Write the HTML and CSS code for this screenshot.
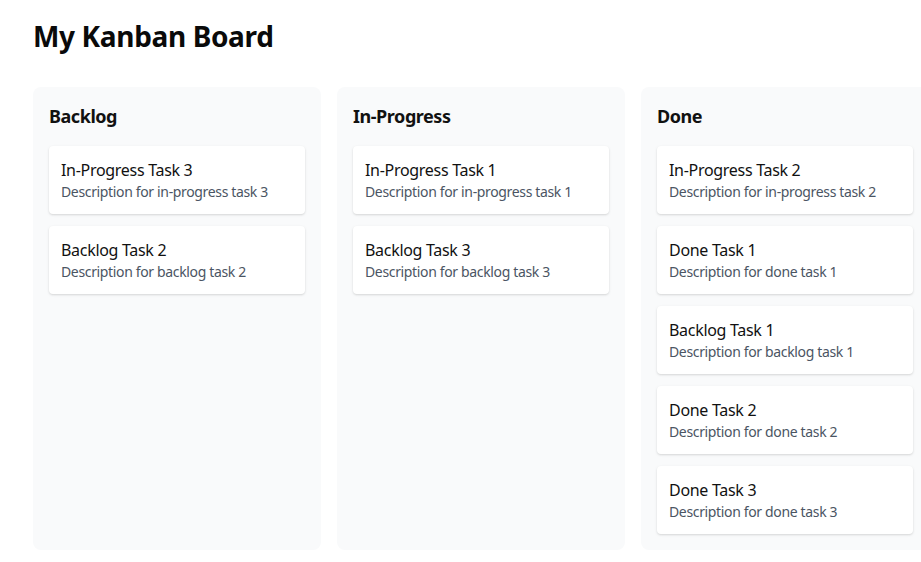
FILE: index.html
```html
<!DOCTYPE html>
<html lang="en">
<head>
<meta charset="utf-8">
<title>My Kanban Board</title>
<link rel="stylesheet" href="styles.css">
</head>
<body>
<div class="app">
  <h1 class="board-title">My Kanban Board</h1>
  <div class="board">
    <section class="column">
      <h2 class="column-title">Backlog</h2>
      <div class="card-list">
        <div class="card"><div class="card-title">In-Progress Task 3</div><div class="card-desc">Description for in-progress task 3</div></div>
        <div class="card"><div class="card-title">Backlog Task 2</div><div class="card-desc">Description for backlog task 2</div></div>
      </div>
    </section>
    <section class="column">
      <h2 class="column-title">In-Progress</h2>
      <div class="card-list">
        <div class="card"><div class="card-title">In-Progress Task 1</div><div class="card-desc">Description for in-progress task 1</div></div>
        <div class="card"><div class="card-title">Backlog Task 3</div><div class="card-desc">Description for backlog task 3</div></div>
      </div>
    </section>
    <section class="column">
      <h2 class="column-title">Done</h2>
      <div class="card-list">
        <div class="card"><div class="card-title">In-Progress Task 2</div><div class="card-desc">Description for in-progress task 2</div></div>
        <div class="card"><div class="card-title">Done Task 1</div><div class="card-desc">Description for done task 1</div></div>
        <div class="card"><div class="card-title">Backlog Task 1</div><div class="card-desc">Description for backlog task 1</div></div>
        <div class="card"><div class="card-title">Done Task 2</div><div class="card-desc">Description for done task 2</div></div>
        <div class="card"><div class="card-title">Done Task 3</div><div class="card-desc">Description for done task 3</div></div>
      </div>
    </section>
  </div>
</div>
</body>
</html>
```
FILE: styles.css
```css
html, body {
  margin: 0;
  padding: 0;
  background: #ffffff;
  overflow: hidden;
}
body {
  font-family: "Noto Sans", "Open Sans", sans-serif;
  color: #111827;
}
.app {
  padding: 16px 33px;
}
.board-title {
  margin: 0 0 31px 0;
  font-size: 28px;
  line-height: 40px;
  font-weight: 700;
  letter-spacing: -0.35px;
  color: #0a0a0a;
}
.board {
  display: flex;
  gap: 16px;
  align-items: stretch;
}
.column {
  flex: 0 0 288px;
  box-sizing: border-box;
  background: #f9fafb;
  border-radius: 8px;
  padding: 16px;
}
.column-title {
  margin: 0 0 17px 0;
  font-size: 18px;
  line-height: 26px;
  font-weight: 700;
  letter-spacing: -0.45px;
  color: #111111;
}
.card-list {
  display: flex;
  flex-direction: column;
  gap: 12px;
}
.card {
  background: #ffffff;
  border-radius: 4px;
  padding: 12px;
  box-shadow: 0 1px 3px rgba(0,0,0,0.1), 0 1px 2px rgba(0,0,0,0.06);
}
.card-title {
  font-size: 16px;
  line-height: 24px;
  letter-spacing: -0.3px;
  color: #111111;
}
.card-desc {
  font-size: 14px;
  line-height: 20px;
  letter-spacing: -0.35px;
  color: #4b5563;
}
```
